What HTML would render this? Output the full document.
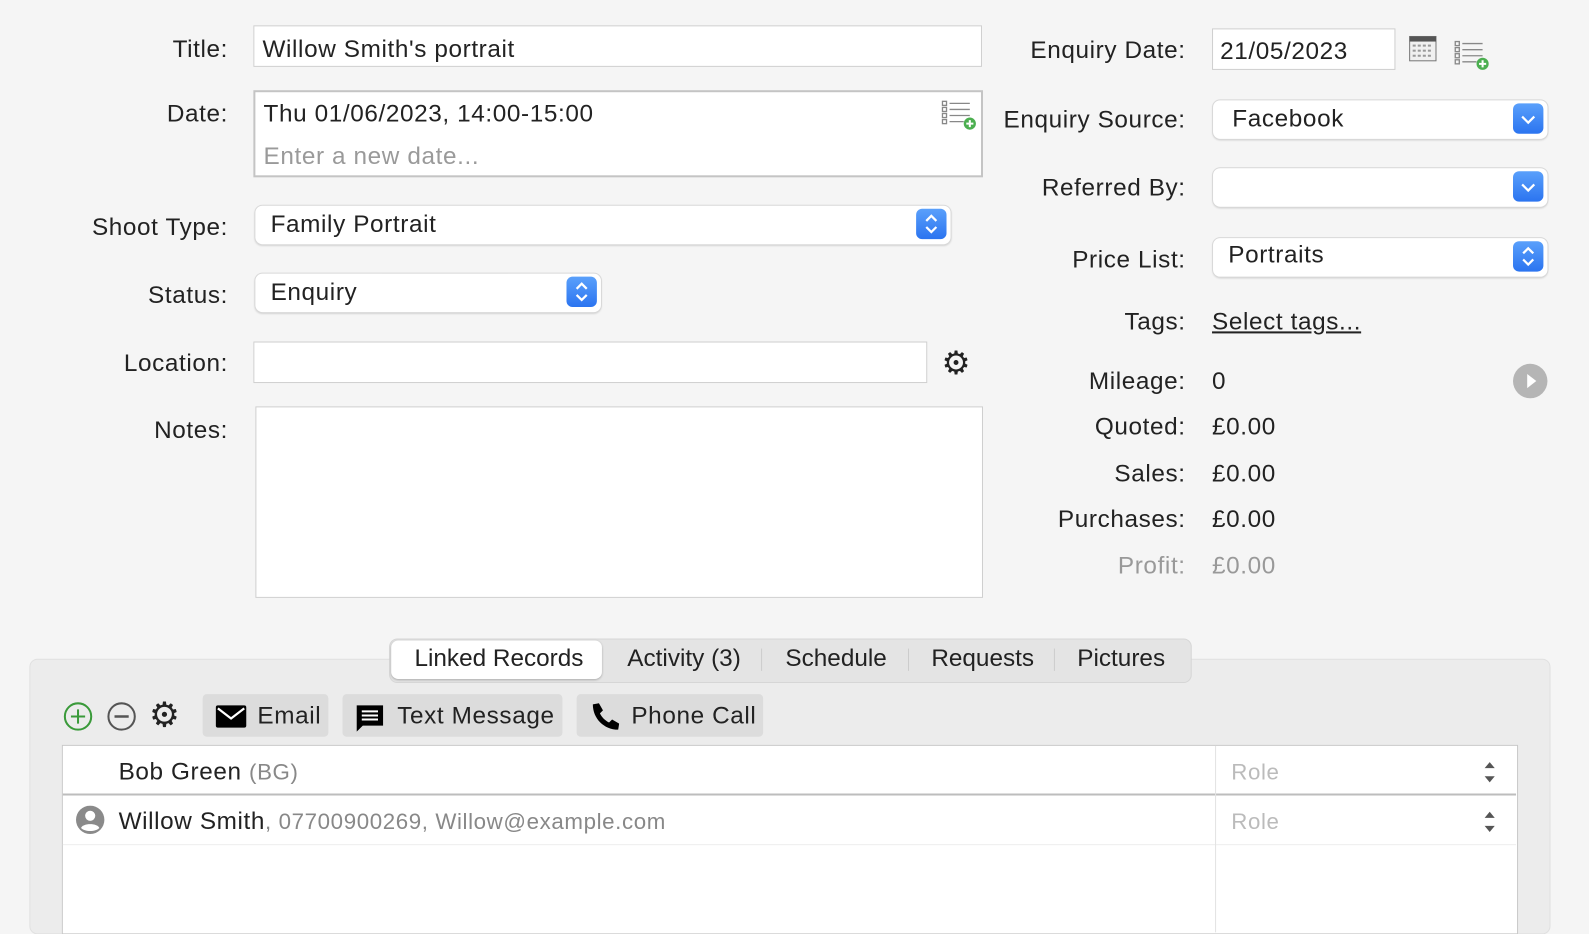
<!DOCTYPE html>
<html><head><meta charset="utf-8"><style>
html,body{margin:0;padding:0;background:#f5f5f5;overflow:hidden}
body{width:1589px;height:919px}
#w{position:absolute;left:0;top:0;width:1568px;height:907px;transform:scale(1.0134);transform-origin:0 0;font-family:"Liberation Sans",sans-serif;font-size:24px;color:#222;letter-spacing:0.6px}
.a{position:absolute}
.lbl{position:absolute;text-align:right;white-space:nowrap}
.inp{position:absolute;background:#fff;border:1px solid #cfcfcf;box-sizing:border-box}
.pop{position:absolute;background:#fff;border-radius:7px;box-shadow:0 0 0 1px #d8d8d8,0 1px 2px rgba(0,0,0,.2);box-sizing:border-box}
.blue{position:absolute;width:30px;height:30px;border-radius:6px;background:linear-gradient(#5aa0fb,#2b74f0);top:3px;right:4px}
.btn{position:absolute;background:#dcdcdc;border-radius:4px;height:42px;top:685px}
.tab{position:absolute;top:649px}
.gear{font-family:"DejaVu Sans",sans-serif}
</style></head><body><div id="w">
<div class="lbl" style="right:1343px;top:35px">Title:</div>
<div class="inp" style="left:250px;top:25px;width:719px;height:41px"><span class="a" style="left:8px;top:9px">Willow Smith's portrait</span></div>
<div class="lbl" style="right:1343px;top:99px">Date:</div>
<div class="inp" style="left:250px;top:89px;width:720px;height:86px;border:2px solid #c4c4c4"><span class="a" style="left:8px;top:8px">Thu 01/06/2023, 14:00-15:00</span><span class="a" style="left:8px;top:50px;color:#9a9a9a">Enter a new date...</span>
<svg class="a" style="left:677px;top:8px" width="36" height="30"><g fill="none" stroke="#888" stroke-width="1.3"><rect x="1" y="1" width="4" height="4"/><rect x="1" y="7" width="4" height="4"/><rect x="1" y="13" width="4" height="4"/><rect x="1" y="19" width="4" height="4"/><path d="M8 3h20M8 9h20M8 15h20M8 21h14"/></g><circle cx="28" cy="23" r="6" fill="#4caf50"/><path d="M28 19.5v7M24.5 23h7" stroke="#fff" stroke-width="2"/></svg></div>
<div class="lbl" style="right:1343px;top:211px">Shoot Type:</div>
<div class="pop" style="left:252px;top:203px;width:686px;height:38px"><span class="a" style="left:15px;top:5px">Family Portrait</span><div class="blue"><svg width="30" height="30"><path d="M10 12l5-5 5 5M10 18l5 5 5-5" fill="none" stroke="#fff" stroke-width="2.2"/></svg></div></div>
<div class="lbl" style="right:1343px;top:278px">Status:</div>
<div class="pop" style="left:252px;top:270px;width:341px;height:38px"><span class="a" style="left:15px;top:5px">Enquiry</span><div class="blue"><svg width="30" height="30"><path d="M10 12l5-5 5 5M10 18l5 5 5-5" fill="none" stroke="#fff" stroke-width="2.2"/></svg></div></div>
<div class="lbl" style="right:1343px;top:345px">Location:</div>
<div class="inp" style="left:250px;top:337px;width:665px;height:41px"></div>
<div class="a gear" style="left:929px;top:340px;font-size:32px;line-height:36px">⚙</div>
<div class="lbl" style="right:1343px;top:411px">Notes:</div>
<div class="inp" style="left:252px;top:401px;width:718px;height:189px"></div>

<div class="lbl" style="right:398px;top:36px">Enquiry Date:</div>
<div class="inp" style="left:1196px;top:28px;width:181px;height:41px"><span class="a" style="left:7px;top:8px">21/05/2023</span></div>
<svg class="a" style="left:1390px;top:33px" width="28" height="28"><rect x="1" y="3" width="26" height="24" fill="#f0f0f0" stroke="#777"/><rect x="1" y="3" width="26" height="5" fill="#555"/><g fill="#999"><rect x="4" y="11" width="3" height="2"/><rect x="9" y="11" width="3" height="2"/><rect x="14" y="11" width="3" height="2"/><rect x="19" y="11" width="3" height="2"/><rect x="4" y="16" width="3" height="2"/><rect x="9" y="16" width="3" height="2"/><rect x="14" y="16" width="3" height="2"/><rect x="19" y="16" width="3" height="2"/><rect x="4" y="21" width="3" height="2"/><rect x="9" y="21" width="3" height="2"/><rect x="14" y="21" width="3" height="2"/><rect x="19" y="21" width="3" height="2"/></g></svg>
<svg class="a" style="left:1435px;top:40px" width="36" height="30"><g fill="none" stroke="#888" stroke-width="1.3"><rect x="1" y="1" width="4" height="4"/><rect x="1" y="7" width="4" height="4"/><rect x="1" y="13" width="4" height="4"/><rect x="1" y="19" width="4" height="4"/><path d="M8 3h20M8 9h20M8 15h20M8 21h14"/></g><circle cx="28" cy="23" r="6" fill="#4caf50"/><path d="M28 19.5v7M24.5 23h7" stroke="#fff" stroke-width="2"/></svg>
<div class="lbl" style="right:398px;top:105px">Enquiry Source:</div>
<div class="pop" style="left:1197px;top:99px;width:330px;height:38px"><span class="a" style="left:19px;top:5px">Facebook</span><div class="blue"><svg width="30" height="30"><path d="M9 13l6 6 6-6" fill="none" stroke="#fff" stroke-width="2.2"/></svg></div></div>
<div class="lbl" style="right:398px;top:172px">Referred By:</div>
<div class="pop" style="left:1197px;top:166px;width:330px;height:38px"><div class="blue"><svg width="30" height="30"><path d="M9 13l6 6 6-6" fill="none" stroke="#fff" stroke-width="2.2"/></svg></div></div>
<div class="lbl" style="right:398px;top:243px">Price List:</div>
<div class="pop" style="left:1197px;top:235px;width:330px;height:38px"><span class="a" style="left:15px;top:3px">Portraits</span><div class="blue"><svg width="30" height="30"><path d="M10 12l5-5 5 5M10 18l5 5 5-5" fill="none" stroke="#fff" stroke-width="2.2"/></svg></div></div>
<div class="lbl" style="right:398px;top:304px">Tags:</div>
<div class="a" style="left:1196px;top:304px;text-decoration:underline">Select tags...</div>
<div class="lbl" style="right:398px;top:363px">Mileage:</div><div class="a" style="left:1196px;top:363px">0</div>
<div class="a" style="left:1493px;top:359px;width:34px;height:34px;border-radius:50%;background:#b5b5b5"><svg width="34" height="34"><path d="M14 10l9 7-9 7z" fill="#fff"/></svg></div>
<div class="lbl" style="right:398px;top:408px">Quoted:</div><div class="a" style="left:1196px;top:408px">£0.00</div>
<div class="lbl" style="right:398px;top:454px">Sales:</div><div class="a" style="left:1196px;top:454px">£0.00</div>
<div class="lbl" style="right:398px;top:499px">Purchases:</div><div class="a" style="left:1196px;top:499px">£0.00</div>
<div class="lbl" style="right:398px;top:545px;color:#999">Profit:</div><div class="a" style="left:1196px;top:545px;color:#999">£0.00</div>

<div class="a" style="left:29px;top:650px;width:1499px;height:270px;background:#ececec;border:1px solid #e0e0e0;border-radius:8px"></div>
<div class="a" style="left:384px;top:630px;width:790px;height:42px;background:#e4e4e4;border:1px solid #d6d6d6;border-radius:8px"></div>
<div class="a" style="left:386px;top:632px;width:208px;height:38px;background:#fff;border-radius:7px;box-shadow:0 1px 2px rgba(0,0,0,.25)"></div>
<div class="tab" style="left:409px;top:636px;letter-spacing:0">Linked Records</div>
<div class="tab" style="left:619px;top:636px;letter-spacing:0">Activity (3)</div>
<div class="tab" style="left:775px;top:636px;letter-spacing:0">Schedule</div>
<div class="tab" style="left:919px;top:636px;letter-spacing:0">Requests</div>
<div class="tab" style="left:1063px;top:636px;letter-spacing:0">Pictures</div>
<div class="a" style="left:751px;top:640px;width:1px;height:22px;background:#ccc"></div>
<div class="a" style="left:896px;top:640px;width:1px;height:22px;background:#ccc"></div>
<div class="a" style="left:1040px;top:640px;width:1px;height:22px;background:#ccc"></div>

<svg class="a" style="left:62px;top:692px" width="32" height="30"><circle cx="15" cy="15" r="13" fill="none" stroke="#3a9a3a" stroke-width="2"/><path d="M15 8v14M8 15h14" stroke="#3a9a3a" stroke-width="2"/></svg>
<svg class="a" style="left:105px;top:692px" width="32" height="30"><circle cx="15" cy="15" r="13" fill="none" stroke="#555" stroke-width="2"/><path d="M8 15h14" stroke="#555" stroke-width="2.5"/></svg>
<div class="a gear" style="left:147px;top:687px;font-size:34px;line-height:38px">⚙</div>
<div class="btn" style="left:200px;width:124px"><svg class="a" style="left:12px;top:10px" width="32" height="24"><rect x="1" y="1" width="30" height="22" rx="2" fill="#000"/><path d="M3 4l13 10 13-10" fill="none" stroke="#fff" stroke-width="2.2"/></svg><span class="a" style="left:54px;top:8px">Email</span></div>
<div class="btn" style="left:338px;width:217px"><svg class="a" style="left:12px;top:9px" width="30" height="30"><path d="M2 2h26v20H8l-6 6z" fill="#000"/><path d="M7 8h16M7 12h16M7 16h16" stroke="#fff" stroke-width="2"/></svg><span class="a" style="left:54px;top:8px">Text Message</span></div>
<div class="btn" style="left:569px;width:184px"><svg class="a" style="left:12px;top:7px" width="30" height="30"><path d="M4 3l6-1 4 7-3 3c2 4 5 7 9 9l3-3 7 4-1 6c-14 0-25-11-25-25z" fill="#000"/></svg><span class="a" style="left:54px;top:8px">Phone Call</span></div>

<div class="a" style="left:61px;top:735px;width:1435px;height:185px;background:#fff;border:1px solid #c8c8c8"></div>
<div class="a" style="left:62px;top:783px;width:1434px;height:2px;background:#bdbdbd"></div>
<div class="a" style="left:62px;top:833px;width:1434px;height:1px;background:#eee"></div>
<div class="a" style="left:1199px;top:736px;width:1px;height:184px;background:#e2e2e2"></div>
<div class="a" style="left:117px;top:748px">Bob Green <span style="color:#888;font-size:22px">(BG)</span></div>
<svg class="a" style="left:75px;top:795px" width="30" height="30"><circle cx="14" cy="14" r="14" fill="#8a8a8a"/><circle cx="14" cy="10" r="5" fill="#fff"/><path d="M5 22c2-5 16-5 18 0-4 4-14 4-18 0z" fill="#fff"/></svg>
<div class="a" style="left:117px;top:797px">Willow Smith<span style="color:#888;font-size:22px">, 07700900269, Willow@example.com</span></div>
<div class="a" style="left:1215px;top:749px;color:#bbb;font-size:22px">Role</div>
<div class="a" style="left:1215px;top:798px;color:#bbb;font-size:22px">Role</div>
<svg class="a" style="left:1463px;top:749px" width="14" height="26"><path d="M2 9l5-6 5 6zM2 17l5 6 5-6z" fill="#555"/></svg>
<svg class="a" style="left:1463px;top:798px" width="14" height="26"><path d="M2 9l5-6 5 6zM2 17l5 6 5-6z" fill="#555"/></svg>
</div></body></html>
